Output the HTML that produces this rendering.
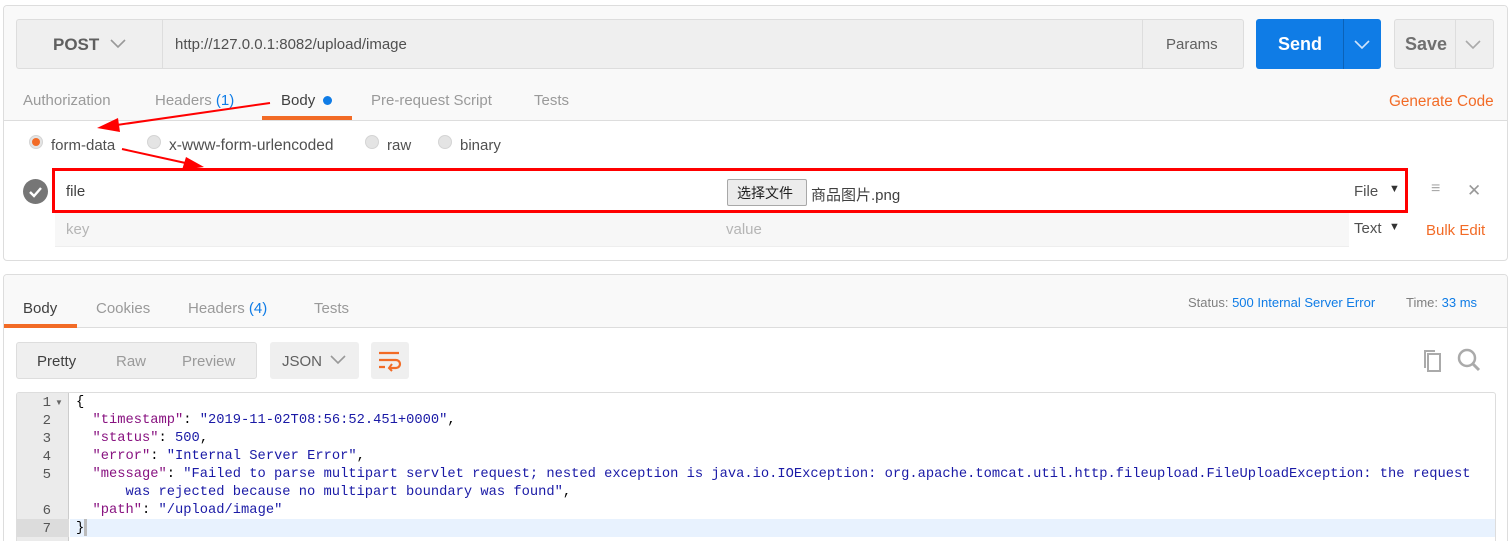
<!DOCTYPE html>
<html><head><meta charset="utf-8"><style>
*{box-sizing:border-box;margin:0;padding:0}
html,body{width:1509px;height:541px;overflow:hidden}
body{background:#fff;position:relative;font-family:"Liberation Sans","Noto Sans CJK SC",sans-serif;font-size:15px;color:#505050}
.a{position:absolute}
.t{position:absolute;white-space:nowrap}
.mono{font-family:"Liberation Mono","DejaVu Sans Mono",monospace;font-size:13.75px}
.k{color:#881280}.s{color:#1a1aa6}.n{color:#1a1aa6}
</style></head><body>
<div class="a" style="left:3px;top:5px;width:1505px;height:256px;border:1px solid #ddd;border-radius:4px;background:#fff;overflow:hidden">
 <div class="a" style="left:0;top:0;width:100%;height:115px;background:#f9f9f9;border-bottom:1px solid #ddd"></div>
</div>
<div class="a" style="left:16px;top:19px;width:1228px;height:50px;border:1px solid #ddd;border-radius:3px;background:#efefef"></div>
<div class="a" style="left:162px;top:20px;width:1px;height:48px;background:#ddd"></div>
<div class="a" style="left:1142px;top:20px;width:1px;height:48px;background:#ddd"></div>
<div class="t" style="left:53px;top:35px;font-size:17px;font-weight:bold;color:#606060">POST</div>
<svg class="a" style="left:110px;top:39px" width="16" height="10"><path d="M1 1l7 7 7-7" fill="none" stroke="#999" stroke-width="1.6"/></svg>
<div class="t" style="left:175px;top:36px;color:#505050">http://127.0.0.1:8082/upload/image</div>
<div class="t" style="left:1166px;top:36px;color:#606060">Params</div>
<div class="a" style="left:1256px;top:19px;width:125px;height:50px;background:#0f7ce6;border-radius:3px"></div>
<div class="a" style="left:1343px;top:19px;width:1px;height:50px;background:#0b62b8"></div>
<div class="t" style="left:1278px;top:34px;font-size:18px;font-weight:bold;color:#fff">Send</div>
<svg class="a" style="left:1354px;top:40px" width="16" height="10"><path d="M1 1l7 7 7-7" fill="none" stroke="#cfe3fa" stroke-width="1.6"/></svg>
<div class="a" style="left:1394px;top:19px;width:100px;height:50px;background:#efefef;border:1px solid #ddd;border-radius:3px"></div>
<div class="a" style="left:1455px;top:20px;width:1px;height:48px;background:#ddd"></div>
<div class="t" style="left:1405px;top:34px;font-size:18px;font-weight:bold;color:#707070">Save</div>
<svg class="a" style="left:1465px;top:40px" width="16" height="10"><path d="M1 1l7 7 7-7" fill="none" stroke="#aaa" stroke-width="1.6"/></svg>
<div class="t" style="left:23px;top:92px;color:#9a9a9a">Authorization</div>
<div class="t" style="left:155px;top:92px;color:#9a9a9a">Headers <span style="color:#0f7ce6">(1)</span></div>
<div class="t" style="left:281px;top:92px;color:#404040">Body</div>
<div class="a" style="left:323px;top:96px;width:9px;height:9px;border-radius:50%;background:#0f7ce6"></div>
<div class="a" style="left:262px;top:116px;width:90px;height:4px;background:#f26b26"></div>
<div class="t" style="left:371px;top:92px;color:#9a9a9a">Pre-request Script</div>
<div class="t" style="left:534px;top:92px;color:#9a9a9a">Tests</div>
<div class="t" style="left:1389px;top:93px;color:#f26b26;font-size:15.3px">Generate Code</div>
<div class="a" style="left:29px;top:135px;width:14px;height:14px;border-radius:50%;background:#e4e4e4;border:1px solid #d4d4d4"></div>
<div class="a" style="left:32px;top:138px;width:8px;height:8px;border-radius:50%;background:#f26b26"></div>
<div class="t" style="left:51px;top:137px;color:#505050">form-data</div>
<div class="a" style="left:147px;top:135px;width:14px;height:14px;border-radius:50%;background:#e4e4e4;border:1px solid #d4d4d4"></div>
<div class="t" style="left:169px;top:137px;color:#505050;font-size:15.5px">x-www-form-urlencoded</div>
<div class="a" style="left:365px;top:135px;width:14px;height:14px;border-radius:50%;background:#e4e4e4;border:1px solid #d4d4d4"></div>
<div class="t" style="left:387px;top:137px;color:#505050">raw</div>
<div class="a" style="left:438px;top:135px;width:14px;height:14px;border-radius:50%;background:#e4e4e4;border:1px solid #d4d4d4"></div>
<div class="t" style="left:460px;top:137px;color:#505050">binary</div>
<div class="a" style="left:23px;top:179px;width:25px;height:25px;border-radius:50%;background:#767676"></div>
<svg class="a" style="left:23px;top:179px" width="25" height="25"><path d="M7 13l4 4 7-8" fill="none" stroke="#fff" stroke-width="2.4"/></svg>
<div class="a" style="left:55px;top:213px;width:1294px;height:34px;background:#f7f7f7;border-bottom:1px solid #eee"></div>
<div class="a" style="left:52px;top:168px;width:1356px;height:45px;border:3px solid #f00;background:#fff"></div>
<div class="t" style="left:66px;top:183px;color:#404040">file</div>
<div class="a" style="left:727px;top:179px;width:80px;height:27px;background:#ececec;border:1px solid #a8a8a8;border-radius:2px"></div>
<div class="t" style="left:737px;top:183px;color:#202020;font-size:14px">选择文件</div>
<div class="t" style="left:811px;top:184px;color:#404040">商品图片.png</div>
<div class="t" style="left:1354px;top:183px;color:#505050">File</div>
<div class="t" style="left:1389px;top:183px;color:#333;font-size:11px">▼</div>
<div class="t" style="left:66px;top:221px;color:#b5b5b5">key</div>
<div class="t" style="left:726px;top:221px;color:#b5b5b5">value</div>
<div class="t" style="left:1354px;top:220px;color:#505050">Text</div>
<div class="t" style="left:1389px;top:221px;color:#333;font-size:11px">▼</div>
<div class="t" style="left:1431px;top:180px;color:#aaa;font-size:16px">≡</div>
<div class="t" style="left:1467px;top:181px;color:#999;font-size:17px">✕</div>
<div class="t" style="left:1426px;top:222px;color:#f26b26">Bulk Edit</div>
<svg class="a" style="left:0;top:0" width="400" height="180">
<line x1="270" y1="103" x2="110" y2="126" stroke="#f00" stroke-width="2"/>
<polygon points="97,128 118,118 120,132" fill="#f00"/>
<line x1="122" y1="149" x2="190" y2="164" stroke="#f00" stroke-width="2"/>
<polygon points="204,167 182,170 186,157" fill="#f00"/>
</svg>
<div class="a" style="left:3px;top:274px;width:1505px;height:280px;border:1px solid #ddd;border-radius:4px;background:#fff;overflow:hidden">
 <div class="a" style="left:0;top:0;width:100%;height:53px;background:#f9f9f9;border-bottom:1px solid #ddd"></div>
</div>
<div class="t" style="left:23px;top:300px;color:#404040">Body</div>
<div class="a" style="left:4px;top:324px;width:73px;height:4px;background:#f26b26"></div>
<div class="t" style="left:96px;top:300px;color:#9a9a9a">Cookies</div>
<div class="t" style="left:188px;top:300px;color:#9a9a9a">Headers <span style="color:#0f7ce6">(4)</span></div>
<div class="t" style="left:314px;top:300px;color:#9a9a9a">Tests</div>
<div class="t" style="left:1188px;top:295px;font-size:13px;color:#808080">Status: <span style="color:#0f7ce6">500 Internal Server Error</span></div>
<div class="t" style="left:1406px;top:295px;font-size:13px;color:#808080">Time: <span style="color:#0f7ce6">33 ms</span></div>
<div class="a" style="left:16px;top:342px;width:241px;height:37px;background:#efefef;border:1px solid #ddd;border-radius:3px"></div>
<div class="t" style="left:37px;top:353px;color:#404040">Pretty</div>
<div class="t" style="left:116px;top:353px;color:#9a9a9a">Raw</div>
<div class="t" style="left:182px;top:353px;color:#9a9a9a">Preview</div>
<div class="a" style="left:270px;top:342px;width:89px;height:37px;background:#efefef;border-radius:3px"></div>
<div class="t" style="left:282px;top:353px;color:#606060">JSON</div>
<svg class="a" style="left:330px;top:355px" width="16" height="10"><path d="M1 1l7 7 7-7" fill="none" stroke="#999" stroke-width="1.6"/></svg>
<div class="a" style="left:371px;top:342px;width:38px;height:37px;background:#efefef;border-radius:3px"></div>
<svg class="a" style="left:377px;top:349px" width="26" height="24"><path d="M2 4h20M2 11h17a4 4 0 0 1 0 8h-6M2 18h6" fill="none" stroke="#f26b26" stroke-width="2.2"/><path d="M15 15l-3 4 3 3" fill="none" stroke="#f26b26" stroke-width="2"/></svg>
<svg class="a" style="left:1422px;top:348px" width="24" height="26"><path d="M2 2h11v2H4v16H2z" fill="#aaa"/><rect x="6" y="6" width="12" height="17" fill="none" stroke="#aaa" stroke-width="2"/></svg>
<svg class="a" style="left:1456px;top:347px" width="26" height="26"><circle cx="11" cy="11" r="8" fill="none" stroke="#aaa" stroke-width="2.5"/><path d="M17 17l6 6" stroke="#aaa" stroke-width="3"/></svg>
<div class="a" style="left:16px;top:392px;width:1480px;height:160px;border:1px solid #ddd;border-radius:3px;background:#fff;overflow:hidden">
 <div class="a" style="left:0;top:0;width:52px;height:160px;background:#ebebeb;border-right:1px solid #ccc"></div>
 <div class="a" style="left:53px;top:126px;width:1430px;height:18px;background:#e8f2fe"></div>
 <div class="a" style="left:0;top:126px;width:52px;height:18px;background:#dcdcdc"></div>
</div>
<div class="a mono" style="left:17px;top:394px;width:34px;text-align:right;line-height:18px;color:#555;font-size:14px">1<br>2<br>3<br>4<br>5<br><br>6<br>7</div>
<div class="t" style="left:55px;top:398px;font-size:8px;color:#666">▼</div>
<pre class="a mono" style="left:76px;top:394px;line-height:18px;color:#000">{
  <span class="k">"timestamp"</span>: <span class="s">"2019-11-02T08:56:52.451+0000"</span>,
  <span class="k">"status"</span>: <span class="n">500</span>,
  <span class="k">"error"</span>: <span class="s">"Internal Server Error"</span>,
  <span class="k">"message"</span>: <span class="s">"Failed to parse multipart servlet request; nested exception is java.io.IOException: org.apache.tomcat.util.http.fileupload.FileUploadException: the request</span>
      <span class="s">was rejected because no multipart boundary was found"</span>,
  <span class="k">"path"</span>: <span class="s">"/upload/image"</span>
}</pre>
<div class="a" style="left:84px;top:519px;width:3px;height:17px;background:#bbb"></div>
</body></html>
